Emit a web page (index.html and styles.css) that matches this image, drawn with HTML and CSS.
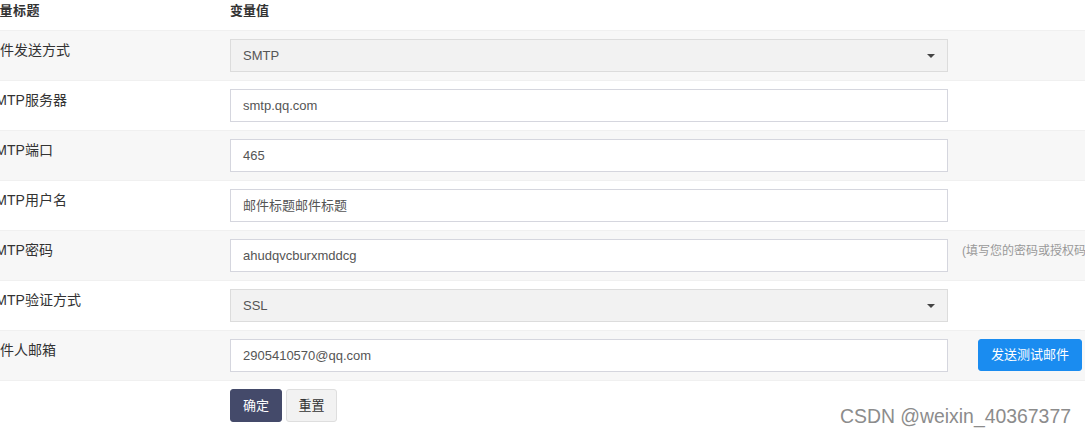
FILE: index.html
```html
<!DOCTYPE html>
<html lang="zh-CN">
<head>
<meta charset="utf-8">
<title>邮件设置</title>
<link rel="stylesheet" href="styles.css">
</head>
<body>
<div class="page">
  <div class="form">
    <div class="row head">
      <div class="cell label">变量标题</div>
      <div class="cell value">变量值</div>
      <div class="cell extra"></div>
    </div>
    <div class="row alt">
      <div class="cell label">邮件发送方式</div>
      <div class="cell value"><div class="field select">SMTP<span class="caret"></span></div></div>
      <div class="cell extra"></div>
    </div>
    <div class="row">
      <div class="cell label">SMTP服务器</div>
      <div class="cell value"><div class="field">smtp.qq.com</div></div>
      <div class="cell extra"></div>
    </div>
    <div class="row alt">
      <div class="cell label">SMTP端口</div>
      <div class="cell value"><div class="field">465</div></div>
      <div class="cell extra"></div>
    </div>
    <div class="row">
      <div class="cell label">SMTP用户名</div>
      <div class="cell value"><div class="field">邮件标题邮件标题</div></div>
      <div class="cell extra"></div>
    </div>
    <div class="row alt">
      <div class="cell label">SMTP密码</div>
      <div class="cell value"><div class="field">ahudqvcburxmddcg</div></div>
      <div class="cell extra"><span class="hint">(填写您的密码或授权码)</span></div>
    </div>
    <div class="row">
      <div class="cell label">SMTP验证方式</div>
      <div class="cell value"><div class="field select">SSL<span class="caret"></span></div></div>
      <div class="cell extra"></div>
    </div>
    <div class="row alt">
      <div class="cell label">发件人邮箱</div>
      <div class="cell value"><div class="field">2905410570@qq.com</div></div>
      <div class="cell extra"><span class="btn btn-blue">发送测试邮件</span></div>
    </div>
    <div class="row actions">
      <div class="cell label"></div>
      <div class="cell value"><span class="btn btn-dark">确定</span><span class="btn btn-light">重置</span></div>
      <div class="cell extra"></div>
    </div>
  </div>
  <div class="watermark">CSDN @weixin_40367377</div>
</div>
</body>
</html>
```

FILE: styles.css
```css
html, body {
  margin: 0;
  padding: 0;
  background: #fff;
}

body {
  font-family: "Liberation Sans", "Noto Sans CJK SC", Arial, sans-serif;
  font-size: 13px;
  color: #333;
}

.page {
  position: relative;
  width: 1085px;
  height: 437px;
  overflow: hidden;
}

.form {
  margin-left: -13px;
  width: 1098px;
}

.row {
  display: grid;
  grid-template-columns: 243px 717px 1fr;
  height: 50px;
  box-sizing: border-box;
  border-top: 1px solid #f0f0f0;
  background: #fff;
}

.row.alt {
  background: #f7f7f7;
}

.row.head {
  height: 30px;
  border-top: 0;
  font-weight: bold;
}

.row.head .cell {
  padding-top: 1px;
  line-height: 20px;
  font-size: 13px;
  margin-left: 0;
}

.row.head .label {
  margin-left: -1px;
  letter-spacing: 0.5px;
}

.row.actions {
  height: 57px;
}

.cell {
  white-space: nowrap;
  min-width: 0;
}

.label {
  margin-left: -1px;
  padding-top: 9px;
  line-height: 20px;
  font-size: 14px;
}

.value {
  padding-top: 8px;
}

.field {
  position: relative;
  box-sizing: border-box;
  height: 33px;
  width: 718px;
  border: 1px solid #d5d6de;
  background: #fff;
  padding: 0 12px;
  line-height: 31px;
  color: #555;
}

.field.select {
  background: #f2f2f2;
  border-color: #dcdcdc;
}

.caret {
  position: absolute;
  right: 12px;
  top: 14px;
  width: 0;
  height: 0;
  border-left: 4px solid transparent;
  border-right: 4px solid transparent;
  border-top: 4px solid #444;
}

.extra {
  overflow: hidden;
}

.hint {
  display: inline-block;
  margin-left: 15px;
  padding-top: 10px;
  line-height: 20px;
  font-size: 12px;
  color: #999;
}

.btn {
  display: inline-block;
  box-sizing: border-box;
  height: 33px;
  line-height: 31px;
  border: 1px solid transparent;
  border-radius: 3px;
  text-align: center;
  font-size: 13px;
  vertical-align: top;
}

.btn-blue {
  margin-top: 8px;
  margin-left: 31px;
  width: 104px;
  height: 32px;
  line-height: 30px;
  background: #1a8cf0;
  border-color: #1a8cf0;
  color: #fff;
}

.btn-dark {
  width: 52px;
  background: #444a6a;
  border-color: #444a6a;
  color: #fff;
}

.btn-light {
  width: 51px;
  margin-left: 4px;
  background: #f2f2f2;
  border-color: #dedede;
  color: #333;
}

.watermark {
  position: absolute;
  left: 840px;
  top: 404px;
  font-family: "Liberation Sans", Arial, sans-serif;
  font-size: 19.4px;
  line-height: 24px;
  color: #8c8c8c;
  text-shadow: 0 0 2px #fff;
  white-space: nowrap;
}
```
